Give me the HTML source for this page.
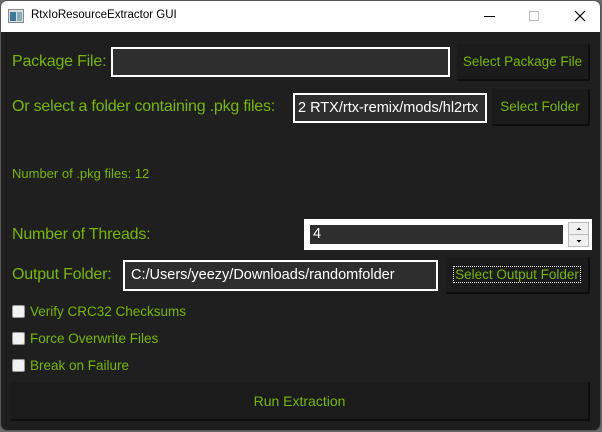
<!DOCTYPE html>
<html><head><meta charset="utf-8"><style>
*{margin:0;padding:0;box-sizing:border-box}
body{width:602px;height:432px;background:#6a6a6a;font-family:"Liberation Sans",sans-serif;overflow:hidden;position:relative}
#win{position:absolute;left:0;top:0;width:601px;height:431px;background:#1f1f1f;border-radius:7px;overflow:hidden;border:1px solid #555}
#title{position:absolute;left:0;top:0;width:100%;height:31px;background:#fff;color:#000;font-size:11.5px}
.a{position:absolute}
.g{color:#76b900;position:absolute;white-space:nowrap}
.lbl{font-size:16px;letter-spacing:-0.2px}
.inp{position:absolute;background:#2e2e2e;border:2px solid #fff;color:#fff;font-size:14.5px;padding-left:6px;line-height:26px;white-space:nowrap;overflow:hidden}
.btn{position:absolute;background:#1b1b1b;border-right:2px solid #0e0e0e;border-bottom:2px solid #0e0e0e;color:#76b900;font-size:13.5px;text-align:center;white-space:nowrap}
.cb{position:absolute;left:11px;width:13px;height:13px;background:#f2f2f2;border:1px solid #999;border-radius:2px}
.cbl{font-size:13.5px;left:29px}
</style></head><body>
<div id="win">
<div id="title">
<svg class="a" style="left:7px;top:8px" width="16" height="14"><rect x="0.5" y="0.5" width="15" height="13" fill="#ddd" stroke="#888"/><rect x="2" y="3" width="6" height="9" fill="#3a7a9a"/><rect x="9" y="3" width="5" height="9" fill="#8ab"/></svg>
<div class="a" style="left:30px;top:8px">RtxIoResourceExtractor GUI</div>
<div class="a" style="left:483px;top:15px;width:11px;height:1px;background:#000"></div>
<div class="a" style="left:528px;top:10px;width:10px;height:10px;border:1px solid #bbb"></div>
<svg class="a" style="left:573px;top:9px" width="12" height="12"><path d="M1 1L11 11M11 1L1 11" stroke="#000" stroke-width="1.2"/></svg>
</div>

<div class="g lbl" style="left:11px;top:52px">Package File:</div>
<div class="inp" style="left:110px;top:46px;width:339px;height:30px"></div>
<div class="btn" style="left:456px;top:43px;width:133px;height:37px;line-height:36px">Select Package File</div>

<div class="g lbl" style="left:11px;top:97px">Or select a folder containing .pkg files:</div>
<div class="inp" style="left:292px;top:92px;width:194px;height:30px;padding-left:3px">2 RTX/rtx-remix/mods/hl2rtx</div>
<div class="btn" style="left:491px;top:88px;width:98px;height:37px;line-height:36px">Select Folder</div>

<div class="g" style="left:11px;top:165px;font-size:13px">Number of .pkg files: 12</div>

<div class="g lbl" style="left:11px;top:225px">Number of Threads:</div>
<div class="a" style="left:303px;top:218px;width:288px;height:31px;background:#fff"></div>
<div class="a" style="left:309px;top:224px;width:253px;height:19px;background:#2e2e2e;color:#fff;font-size:14.5px;line-height:19px;padding-left:3px">4</div>
<div class="a" style="left:567px;top:221px;width:21px;height:25px;border:1px solid #bbb;background:#f0f0f0"></div>
<div class="a" style="left:567px;top:233px;width:21px;height:1px;background:#bbb"></div>
<svg class="a" style="left:574px;top:224px" width="8" height="20"><path d="M1.5 5L4 2.5L6.5 5Z M1.5 15L4 17.5L6.5 15Z" fill="#000"/></svg>

<div class="g lbl" style="left:11px;top:265px">Output Folder:</div>
<div class="inp" style="left:122px;top:259px;width:315px;height:31px">C:/Users/yeezy/Downloads/randomfolder</div>
<div class="btn" style="left:445px;top:256px;width:144px;height:37px;line-height:36px"><span style="outline:1px dotted #fff;padding:0 1px">Select Output Folder</span></div>

<div class="cb" style="top:304px"></div><div class="g cbl" style="top:303px">Verify CRC32 Checksums</div>
<div class="cb" style="top:331px"></div><div class="g cbl" style="top:330px">Force Overwrite Files</div>
<div class="cb" style="top:358px"></div><div class="g cbl" style="top:357px">Break on Failure</div>

<div class="btn" style="left:10px;top:381px;width:579px;height:39px;line-height:39px;font-size:14px">Run Extraction</div>
</div>
</body></html>
